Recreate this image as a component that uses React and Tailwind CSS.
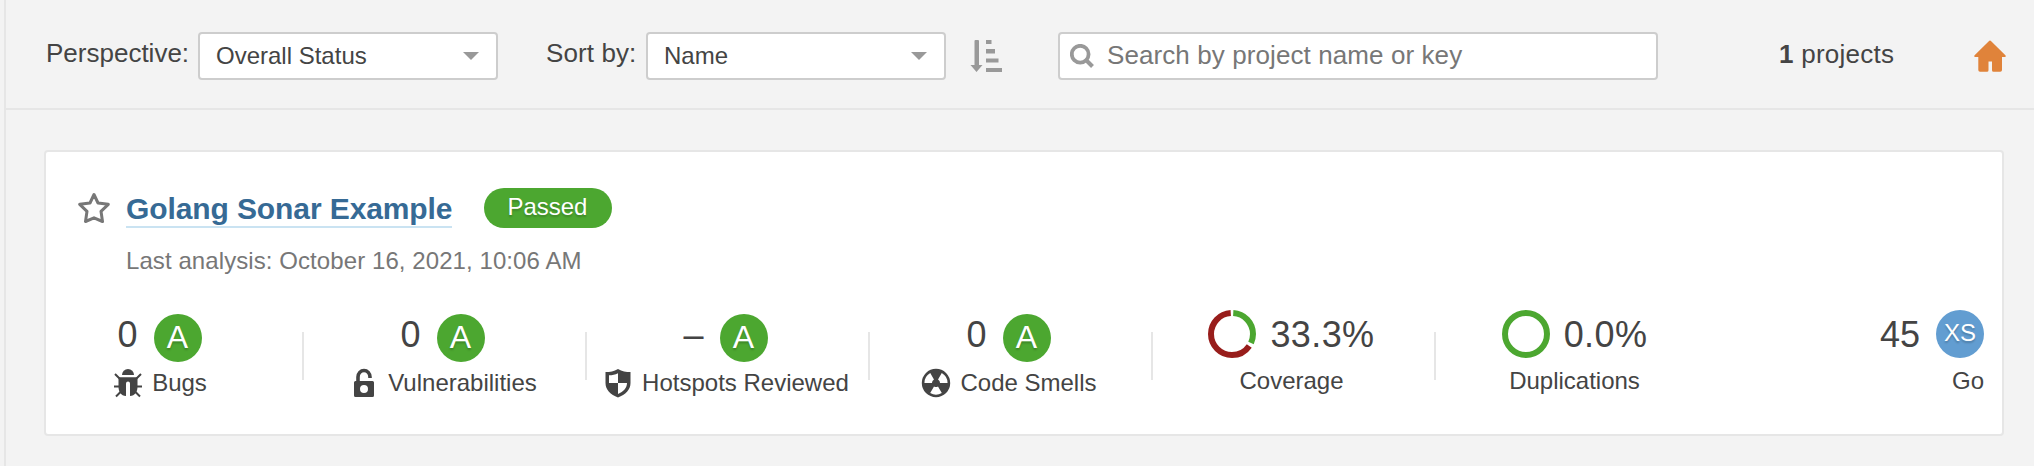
import React from 'react';

const METRICS = [
  { key: 'bugs', label: 'Bugs', value: '0', rating: 'A', icon: BugIcon },
  { key: 'vulnerabilities', label: 'Vulnerabilities', value: '0', rating: 'A', icon: UnlockIcon },
  { key: 'hotspots', label: 'Hotspots Reviewed', value: '–', rating: 'A', icon: ShieldIcon },
  { key: 'smells', label: 'Code Smells', value: '0', rating: 'A', icon: RadiationIcon },
  { key: 'coverage', label: 'Coverage', value: '33.3%', chart: CoverageRing },
  { key: 'duplications', label: 'Duplications', value: '0.0%', chart: DuplicationsRing },
];

function BugIcon() {
  return (
    <svg className="h-8 w-8 shrink-0" viewBox="0 0 32 32" fill="none">
      <path d="M10 8a6 6 0 0 1 12 0z" fill="#444" />
      <path d="M6.500 10.300h19v9.500c0 5-2.500 9.200-7.500 9.200V16.500a2 2 0 0 0-4 0V29c-5 0-7.500-4.200-7.500-9.200z" fill="#444" />
      <path d="M3 7l4.500 4.500M29 7l-4.500 4.500M2 19.500h6M30 19.500h-6M4 29.500l5-5M28 29.500l-5-5" stroke="#444" strokeWidth="2" />
    </svg>
  );
}

function UnlockIcon() {
  return (
    <svg className="h-8 w-8 shrink-0" viewBox="0 0 32 32" fill="none">
      <path d="M10 15V10a6 6.500 0 0 1 12 0v1" stroke="#444" strokeWidth="3.600" />
      <path fillRule="evenodd" d="M7.500 14h17a1.500 1.500 0 0 1 1.500 1.500v13a1.500 1.500 0 0 1-1.500 1.500h-17a1.500 1.500 0 0 1-1.500-1.500v-13A1.500 1.500 0 0 1 7.500 14zM16 18a4 4 0 1 0 0 8 4 4 0 0 0 0-8z" fill="#444" />
    </svg>
  );
}

function ShieldIcon() {
  return (
    <svg className="h-8 w-8 shrink-0" viewBox="0 0 32 32">
      <path d="M16 2c4 2.500 8 3 12.500 3v11c0 7-5 11.500-12.500 14.500C8.500 27.500 3.500 23 3.500 16V5C8 5 12 4.500 16 2z" fill="#444" />
      <path d="M16 6.200V16H7V8.200c3.500 0 6-.6 9-2zM16 16h9c0 5-3.500 8.500-9 11z" fill="#fff" />
    </svg>
  );
}

function RadiationIcon() {
  return (
    <svg className="h-8 w-8 shrink-0" viewBox="0 0 32 32">
      <circle cx="16" cy="16" r="14.200" fill="#444" />
      {[0, 120, 240].map((angle) => (
        <path key={angle} d="M18 19.500L21.800 26a11.500 11.500 0 0 1-11.600 0L14 19.500a4 4 0 0 0 4 0z" fill="#fff" transform={`rotate(${angle} 16 16)`} />
      ))}
    </svg>
  );
}

function CoverageRing() {
  return (
    <svg className="h-12 w-12" viewBox="0 0 48 48" fill="none" strokeWidth="6">
      <circle cx="24" cy="24" r="21" pathLength="300" strokeDasharray="93 207" strokeDashoffset="-3" transform="rotate(-90 24 24)" className="stroke-[#4ca730]" />
      <circle cx="24" cy="24" r="21" pathLength="300" strokeDasharray="193 107" strokeDashoffset="-104" transform="rotate(-90 24 24)" className="stroke-[#981d1b]" />
    </svg>
  );
}

function DuplicationsRing() {
  return (
    <svg className="h-12 w-12" viewBox="0 0 48 48" fill="none">
      <circle cx="24" cy="24" r="21" strokeWidth="6" className="stroke-[#4ca730]" />
    </svg>
  );
}

function SortIcon() {
  return (
    <svg className="h-8 w-8" viewBox="0 0 32 32" fill="#999">
      <path d="M5.500 0h2.500a1 1 0 0 1 1 1v24h3.500L6.500 32 .5 25H4.500V1a1 1 0 0 1 1-1z" />
      <path d="M16 0h5.500v4H16zM16 9h9v4.500h-9zM16 18.500h12.500v4H16zM16 28h16v4H16z" />
    </svg>
  );
}

function Select({ value }) {
  return (
    <button type="button" className="flex h-12 w-[300px] items-center justify-between rounded border-2 border-[#cdcdcd] bg-white pr-[17px] pl-4 text-2xl">
      <span>{value}</span>
      <svg className="h-2 w-4" viewBox="0 0 16 8">
        <path d="M0 0h16L8 8z" fill="#999" />
      </svg>
    </button>
  );
}

function Toolbar() {
  return (
    <header className="flex h-[110px] items-start border-b-2 border-[#e6e6e6] pt-8 pl-10 text-[26px]">
      <span className="w-[152px] leading-[42px]">Perspective:</span>
      <Select value="Overall Status" />
      <span className="ml-12 w-[100px] leading-[42px] tracking-[0.1px]">Sort by:</span>
      <Select value="Name" />
      <button type="button" className="mt-2 ml-6">
        <SortIcon />
      </button>
      <div className="ml-14 flex h-12 w-[600px] items-center rounded border-2 border-[#cdcdcd] bg-white pl-2.5">
        <svg className="h-6 w-6" viewBox="0 0 24 24" fill="none" stroke="#999">
          <circle cx="10.200" cy="10.200" r="8.400" strokeWidth="3.800" />
          <path d="M16 16l6.500 6.500" strokeWidth="4" />
        </svg>
        <input type="text" placeholder="Search by project name or key" className="mb-0.5 ml-[13px] w-[500px] tracking-[0.09px] outline-none placeholder:text-[#777]" />
      </div>
      <span className="ml-[121px] w-[195px] leading-[45px] tracking-[0.25px]">
        <strong>1</strong> projects
      </span>
      <svg className="mt-2 h-8 w-8" viewBox="0 0 32 32" fill="#e0833a">
        <path d="M14.800 1.200a1.700 1.700 0 0 1 2.400 0L31.400 15.200c.7.700.3 1.800-.7 1.800H28v13a1.700 1.700 0 0 1-1.700 1.700H19.500a1.500 1.500 0 0 1-1.500-1.500V21.500h-3.500V30.200a1.500 1.500 0 0 1-1.500 1.500H6A1.700 1.700 0 0 1 4.300 30V17H1.300C.3 17-.1 15.900.6 15.200z" />
      </svg>
    </header>
  );
}

function Metric({ metric, className }) {
  const Icon = metric.icon;
  const Chart = metric.chart;
  return (
    <div className={`flex shrink-0 flex-col items-center ${className}`}>
      <div className={`flex h-12 items-center ${Chart ? 'gap-3.5 tracking-[0.4px]' : 'gap-4'}`}>
        {Chart && <Chart />}
        <span className="pt-0.5 text-4xl leading-[52px]">{metric.value}</span>
        {metric.rating && (
          <span className="mt-2 h-12 w-12 rounded-full bg-[#4ca730] text-center text-[32px] leading-[46px] text-white [text-shadow:0_2px_2px_rgba(0,0,0,0.2)]">
            {metric.rating}
          </span>
        )}
      </div>
      <div className={`flex items-center gap-2 text-2xl leading-8 ${Icon ? 'mt-2' : 'mt-[7px]'}`}>
        {Icon && <Icon />}
        <span className={Icon ? 'pt-px whitespace-nowrap' : ''}>{metric.label}</span>
      </div>
    </div>
  );
}

function ProjectCard() {
  return (
    <article className="mt-10 ml-[38px] h-[286px] w-[1960px] rounded border-2 border-[#e6e6e6] bg-white">
      <div className="flex h-[76px] items-end pl-8">
        <svg className="mb-1 h-8 w-8" viewBox="0 0 32 32" fill="none">
          <path d="M16 2.500l4 8.500 10.300 1.300-7.300 7L24.500 29.500 16 25.800 7.500 29.500 9 19.300l-7.300-7L12 11z" stroke="#777" strokeWidth="3" strokeLinejoin="round" />
        </svg>
        <a href="#" className="ml-4 h-[38px] border-b-2 border-[#cae3f2] text-3xl leading-[38px] font-bold tracking-[-0.1px] whitespace-nowrap text-[#366a95]">Golang Sonar Example</a>
        <span className="ml-8 h-10 w-32 rounded-full bg-[#4ca730] pr-0.5 text-center text-2xl leading-[38px] text-white [text-shadow:0_2px_2px_rgba(0,0,0,0.2)]">Passed</span>
      </div>
      <p className="mt-[17px] mb-[33px] pl-20 text-2xl leading-8 tracking-[0.08px] text-[#777]">Last analysis: October 16, 2021, 10:06 AM</p>
      <div className="flex">
        {METRICS.map((m, i) => (
          <React.Fragment key={m.key}>
            {i > 0 && <div className="mt-[22px] h-12 w-0.5 shrink-0 bg-[#e6e6e6]" />}
            <Metric metric={m} className={i === 0 ? 'w-64 pr-[29px]' : 'w-[281px] pr-1'} />
          </React.Fragment>
        ))}
        <div className="flex flex-1 flex-col items-end pr-[18px]">
          <div className="flex h-12 items-center gap-4">
            <span className="pt-0.5 text-4xl leading-[52px]">45</span>
            <span className="h-12 w-12 rounded-full bg-[#629dd1] text-center text-2xl leading-[46px] text-white [text-shadow:0_2px_2px_rgba(0,0,0,0.2)]">XS</span>
          </div>
          <div className="mt-[7px] text-2xl leading-8">Go</div>
        </div>
      </div>
    </article>
  );
}

export default function App() {
  return (
    <div className="h-[466px] w-[2034px] overflow-hidden bg-[#f3f3f3] pl-1 font-['Liberation_Sans',Arial,sans-serif] text-[#444]">
      <main className="h-full border-l-2 border-[#e6e6e6]">
        <Toolbar />
        <ProjectCard />
      </main>
    </div>
  );
}
